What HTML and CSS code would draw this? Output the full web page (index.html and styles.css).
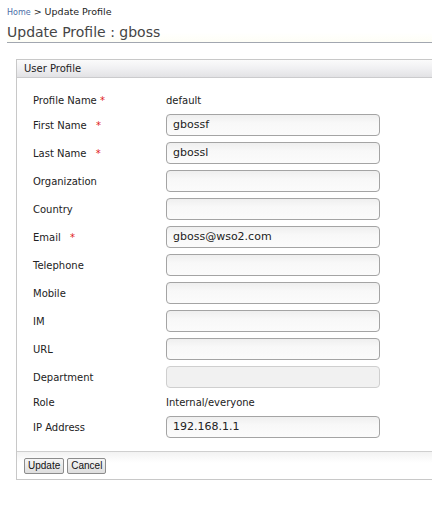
FILE: index.html
```html
<!DOCTYPE html>
<html>
<head>
<meta charset="utf-8">
<link rel="stylesheet" href="styles.css">
</head>
<body>
<div class="page">
  <div class="crumb"><a class="crumb-link" href="#">Home</a> &gt; Update Profile</div>
  <h2 class="title">Update Profile : gboss</h2>
  <div class="box">
    <div class="box-head">User Profile</div>
    <div class="box-body">
      <table class="form">
        <tr class="row-text"><td class="lbl">Profile Name <span class="req">*</span></td><td class="val">default</td></tr>
        <tr class="row-input"><td class="lbl">First Name <span class="req req-gap">*</span></td><td><div class="field">gbossf</div></td></tr>
        <tr class="row-input"><td class="lbl">Last Name <span class="req req-gap">*</span></td><td><div class="field">gbossl</div></td></tr>
        <tr class="row-input"><td class="lbl">Organization</td><td><div class="field"></div></td></tr>
        <tr class="row-input"><td class="lbl">Country</td><td><div class="field"></div></td></tr>
        <tr class="row-input"><td class="lbl">Email <span class="req req-gap">*</span></td><td><div class="field">gboss@wso2.com</div></td></tr>
        <tr class="row-input"><td class="lbl">Telephone</td><td><div class="field"></div></td></tr>
        <tr class="row-input"><td class="lbl">Mobile</td><td><div class="field"></div></td></tr>
        <tr class="row-input"><td class="lbl">IM</td><td><div class="field"></div></td></tr>
        <tr class="row-input"><td class="lbl">URL</td><td><div class="field"></div></td></tr>
        <tr class="row-input"><td class="lbl">Department</td><td><div class="field field-disabled"></div></td></tr>
        <tr class="row-text"><td class="lbl">Role</td><td class="val">Internal/everyone</td></tr>
        <tr class="row-input"><td class="lbl">IP Address</td><td><div class="field">192.168.1.1</div></td></tr>
      </table>
    </div>
    <div class="box-foot">
      <button class="btn">Update</button><button class="btn">Cancel</button>
    </div>
  </div>
</div>
</body>
</html>
```

FILE: styles.css
```css
html, body {
  margin: 0;
  padding: 0;
  background: #ffffff;
  overflow: hidden;
}

body {
  font-family: "DejaVu Sans", Verdana, sans-serif;
  color: #222;
}

.page {
  padding: 5px 0 0 7px;
}

.crumb {
  height: 14px;
  line-height: 14px;
  font-size: 9.5px;
  color: #222;
}

.crumb-link {
  color: #4b6fa8;
  text-decoration: none;
  font-size: 8px;
}

.title {
  margin: 4px 0 0 0;
  padding: 0 0 1px 0;
  font-size: 14px;
  line-height: 18px;
  font-weight: normal;
  color: #454545;
  border-bottom: 1px solid #a2a7b0;
  background: linear-gradient(to bottom, #ffffff 50%, #fefef6 100%);
}

.box {
  margin: 16px 0 0 9px;
  border: 1px solid #c8c8c8;
  border-right: none;
}

.box-head {
  height: 17px;
  line-height: 17px;
  font-size: 10px;
  padding-left: 7px;
  color: #222;
  background: linear-gradient(to bottom, #fbfbfb 0%, #f0f0f2 50%, #e2e2e5 100%);
  border-bottom: 1px solid #cbcbcd;
}

.box-body {
  padding: 11px 0 10px 16px;
}

.form {
  border-collapse: collapse;
}

.form td {
  padding: 0;
  vertical-align: middle;
}

.lbl {
  width: 133px;
  font-size: 10px;
  color: #222;
  white-space: nowrap;
}

.val {
  font-size: 10px;
  color: #222;
}

.row-text {
  height: 22px;
}

.row-input {
  height: 28px;
}

.req {
  color: #e02020;
}

.req-gap {
  margin-left: 6px;
}

.field {
  box-sizing: border-box;
  width: 214px;
  height: 22px;
  border: 1px solid #a4a4a4;
  border-radius: 4px;
  background: linear-gradient(to bottom, #efefef 0%, #f8f8f8 40%, #fbfbfb 100%);
  font-size: 11px;
  line-height: 20px;
  padding-left: 6px;
  color: #222;
}

.field-disabled {
  border-color: #cfcfcf;
  background: #f1f1f1;
}

.box-foot {
  height: 28px;
  border-top: 1px solid #cfcfcf;
  padding: 6px 0 0 7px;
  box-sizing: border-box;
  display: flex;
  gap: 3px;
  align-items: flex-start;
  background: linear-gradient(to bottom, #f2f2f2 0%, #ffffff 40%);
}

.btn {
  height: 16px;
  margin: 0;
  padding: 0 3px;
  font-family: "Liberation Sans", Arial, sans-serif;
  font-size: 10px;
  line-height: 14px;
  color: #111;
  background: linear-gradient(to bottom, #f6f6f6, #dedede);
  border: 1px solid #8c8c8c;
  border-radius: 2px;
}
```
